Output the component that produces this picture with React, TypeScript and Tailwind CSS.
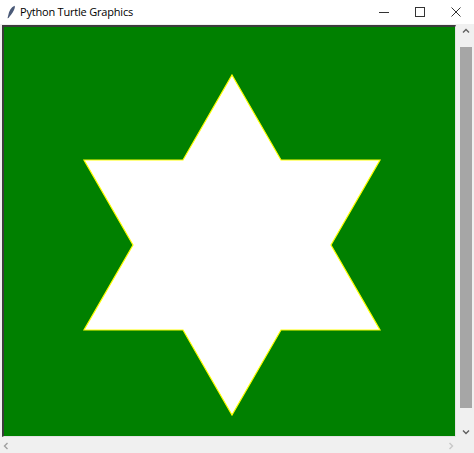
import React from 'react';

// star points in page coordinates; green area starts at (4, 27)
const star = [
  [232, 75], [281, 160], [380, 160], [331, 245], [380, 330], [281, 330],
  [232, 415], [183, 330], [84, 330], [133, 245], [84, 160], [183, 160],
];

function Feather() {
  return (
    <svg width="10" height="14" viewBox="0 0 10 14">
      <path d="M8.5 0.8 C5 2.5 3 6 2.2 10.5 L1.5 13.2 L2.6 13 C3.5 11.5 6.5 8.5 8 5 C9 3 9.2 1.5 8.5 0.8 Z" fill="#4a5a78" />
    </svg>
  );
}

export default function App() {
  const pts = star.map(([x, y]) => `${x - 4},${y - 27}`).join(' ');
  return (
    <div className="w-[474px] h-[453px] bg-[#f0f0f0] flex flex-col overflow-hidden" style={{ fontFamily: '"Open Sans", "Noto Sans", sans-serif' }}>
      {/* title bar */}
      <div className="h-[24px] bg-white flex items-center shrink-0">
        <div className="w-[20px] flex justify-center pl-[2px]">
          <Feather />
        </div>
        <span className="text-[11px] text-black tracking-[-0.2px]">Python Turtle Graphics</span>
        <div className="flex-1" />
        <div className="w-[36px] flex justify-center">
          <svg width="10" height="10" viewBox="0 0 10 10"><path d="M0 5.5 H10" stroke="#333" strokeWidth="1" /></svg>
        </div>
        <div className="w-[36px] flex justify-center">
          <svg width="10" height="10" viewBox="0 0 10 10"><rect x="0.5" y="0.5" width="9" height="9" fill="none" stroke="#333" strokeWidth="1" /></svg>
        </div>
        <div className="w-[36px] flex justify-center">
          <svg width="10" height="10" viewBox="0 0 10 10"><path d="M0.5 0.5 L9.5 9.5 M9.5 0.5 L0.5 9.5" stroke="#333" strokeWidth="1" /></svg>
        </div>
      </div>

      {/* body */}
      <div className="flex flex-1 pt-[1px]">
        <div className="flex-1 pl-[2px] pr-[1px] pb-[1px] flex">
          <div className="flex-1 border-t-2 border-l-2 border-t-[#3c3c3c] border-l-[#3c3c3c] border-r border-b border-r-[#e3e3e3] border-b-[#e3e3e3] bg-[#008000] relative">
            <svg className="absolute inset-0" width="100%" height="100%">
              <polygon points={pts} fill="#ffffff" stroke="#ffff00" strokeWidth="1.2" strokeLinejoin="miter" />
            </svg>
          </div>
        </div>
        {/* vertical scrollbar */}
        <div className="w-[17px] flex flex-col items-center bg-[#f0f0f0]">
          <div className="h-[10px] mt-[1px] flex items-center justify-center">
            <svg width="8" height="6" viewBox="0 0 8 6"><path d="M1 4.5 L4 1.5 L7 4.5" fill="none" stroke="#606060" strokeWidth="1.4" /></svg>
          </div>
          <div className="w-[12px] flex-1 bg-[#a6a6a6] mt-[11px] mb-[18px]" />
          <div className="h-[12px] flex items-center justify-center">
            <svg width="8" height="6" viewBox="0 0 8 6"><path d="M1 1.5 L4 4.5 L7 1.5" fill="none" stroke="#606060" strokeWidth="1.4" /></svg>
          </div>
        </div>
      </div>

      {/* horizontal scrollbar */}
      <div className="h-[15px] shrink-0 flex items-center justify-between pl-[3px] pr-[20px]">
        <svg width="6" height="8" viewBox="0 0 6 8"><path d="M4.5 1 L1.5 4 L4.5 7" fill="none" stroke="#a0a0a0" strokeWidth="1.4" /></svg>
        <svg width="6" height="8" viewBox="0 0 6 8"><path d="M1.5 1 L4.5 4 L1.5 7" fill="none" stroke="#c8c8c8" strokeWidth="1.4" /></svg>
      </div>
    </div>
  );
}
